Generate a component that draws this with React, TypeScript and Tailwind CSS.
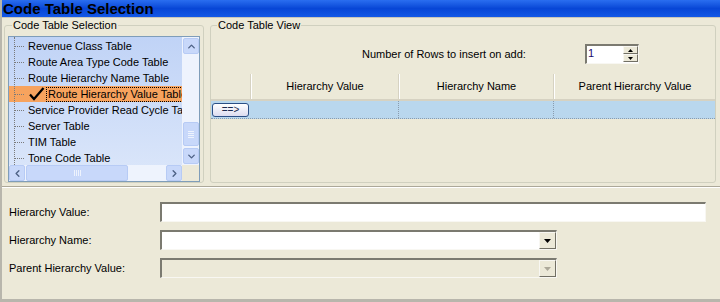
import { ChevronUp, ChevronDown, ChevronLeft, ChevronRight } from 'lucide-react'

const tables = [
  'Revenue Class Table',
  'Route Area Type Code Table',
  'Route Hierarchy Name Table',
  'Route Hierarchy Value Table',
  'Service Provider Read Cycle Table',
  'Server Table',
  'TIM Table',
  'Tone Code Table',
]

const selected = 'Route Hierarchy Value Table'

function ScrollButton({ children }: { children: React.ReactNode }) {
  return (
    <div className="flex h-[16px] w-[16px] shrink-0 items-center justify-center rounded-[2px] border border-[#b7cbf5] bg-[#c8d8fa] text-[#4d6185]">
      {children}
    </div>
  )
}

function Sunken({ className, children }: { className: string; children?: React.ReactNode }) {
  return (
    <div className={`border-t-2 border-l-2 border-r border-b border-t-[#7b7a70] border-l-[#7b7a70] border-r-[#f8f7f2] border-b-[#f8f7f2] ${className}`}>
      {children}
    </div>
  )
}

function DropButton({ disabled }: { disabled?: boolean }) {
  return (
    <div className="flex h-full w-[17px] items-center justify-center border border-t-[#f8f7f2] border-l-[#f8f7f2] border-r-[#716f64] border-b-[#716f64] bg-[#ece9d8]">
      <svg width="7" height="4" viewBox="0 0 7 4">
        <path d="M0 0h7L3.5 4z" fill={disabled ? '#aca899' : '#000'} />
      </svg>
    </div>
  )
}

function CodeTableList() {
  return (
    <fieldset className="mr-0 ml-[2px] h-[164px] w-[200px] min-w-0 shrink-0 rounded-[3px] border border-[#d0d0bf] px-[3px] pt-0 pb-[1px]">
      <legend className="ml-[4px] px-[1px] text-[11px] leading-[13px] text-black">
        Code Table Selection
      </legend>
      <div className="mt-[4px] flex h-[146px] flex-col border border-[#7f9db9] bg-gradient-to-b from-[#c0d3f6] to-[#dce7fa]">
        <div className="flex h-[128px] min-w-0">
          <ul className="relative min-w-0 flex-1 overflow-hidden pt-[1px]">
            <div className="absolute top-0 bottom-0 left-[5px] border-l border-dotted border-[#7a7a7a]" />
            {tables.map((t) =>
              t === selected ? (
                <li key={t} className="flex h-[16px] items-center bg-[#f7a35e]">
                  <div className="ml-[6px] w-[9px] shrink-0 border-t border-dotted border-[#7a7a7a]" />
                  <svg className="ml-[5px] shrink-0" width="16" height="14" viewBox="0 0 16 14">
                    <path d="M1 7.5 L5 12 L14.5 1" stroke="#000" strokeWidth="2.2" fill="none" />
                  </svg>
                  <span className="ml-[1px] border border-dotted border-black pr-[1px] pl-[1px] text-[11px] leading-[13px] whitespace-nowrap">
                    {t}
                  </span>
                </li>
              ) : (
                <li key={t} className="flex h-[16px] items-center">
                  <div className="ml-[6px] w-[9px] shrink-0 border-t border-dotted border-[#7a7a7a]" />
                  <span className="ml-[4px] text-[11px] whitespace-nowrap text-black">{t}</span>
                </li>
              )
            )}
          </ul>
          <div className="flex w-[17px] shrink-0 flex-col justify-between bg-[#eef3fd] py-[1px] pl-[1px]">
            <ScrollButton>
              <ChevronUp size={11} strokeWidth={3} />
            </ScrollButton>
            <div className="flex flex-1 flex-col justify-end pb-[2px]">
              <div className="flex h-[24px] w-[16px] flex-col items-center justify-center gap-[1px] rounded-[2px] border border-[#b7cbf5] bg-[#c8d8fa]">
                <div className="h-px w-[6px] bg-[#eef3fd]" />
                <div className="h-px w-[6px] bg-[#eef3fd]" />
                <div className="h-px w-[6px] bg-[#eef3fd]" />
                <div className="h-px w-[6px] bg-[#eef3fd]" />
              </div>
            </div>
            <ScrollButton>
              <ChevronDown size={11} strokeWidth={3} />
            </ScrollButton>
          </div>
        </div>
        <div className="flex h-[16px] items-center bg-[#eef3fd]">
          <ScrollButton>
            <ChevronLeft size={11} strokeWidth={3} />
          </ScrollButton>
          <div className="ml-[1px] flex h-[16px] w-[102px] items-center justify-center gap-[1px] rounded-[2px] border border-[#b7cbf5] bg-[#c8d8fa]">
            <div className="h-[6px] w-px bg-[#eef3fd]" />
            <div className="h-[6px] w-px bg-[#eef3fd]" />
            <div className="h-[6px] w-px bg-[#eef3fd]" />
            <div className="h-[6px] w-px bg-[#eef3fd]" />
          </div>
          <div className="flex-1" />
          <ScrollButton>
            <ChevronRight size={11} strokeWidth={3} />
          </ScrollButton>
          <div className="h-[16px] w-[17px] bg-[#ece9d8]" />
        </div>
      </div>
    </fieldset>
  )
}

function CodeTableView() {
  return (
    <fieldset className="mr-[4px] h-[164px] min-w-0 flex-1 rounded-[3px] border border-[#d0d0bf] p-0">
      <legend className="ml-[6px] px-[1px] text-[11px] leading-[13px] text-black">
        Code Table View
      </legend>
      <div className="mt-[12px] flex items-center">
        <span className="ml-[151px] w-[223px] text-[11px] text-black">
          Number of Rows to insert on add:
        </span>
        <Sunken className="flex h-[20px] w-[54px] bg-white">
          <span className="flex-1 pl-[1px] text-[11px] leading-[15px] text-[#1b0a6b]">1</span>
          <div className="flex w-[15px] flex-col">
            <div className="flex h-[8px] items-center justify-center border border-t-[#f8f7f2] border-l-[#f8f7f2] border-r-[#716f64] border-b-[#716f64] bg-[#ece9d8]">
              <svg width="5" height="3" viewBox="0 0 5 3">
                <path d="M0 3h5L2.5 0z" fill="#000" />
              </svg>
            </div>
            <div className="flex h-[8px] items-center justify-center border border-t-[#f8f7f2] border-l-[#f8f7f2] border-r-[#716f64] border-b-[#716f64] bg-[#ece9d8]">
              <svg width="5" height="3" viewBox="0 0 5 3">
                <path d="M0 0h5L2.5 3z" fill="#000" />
              </svg>
            </div>
          </div>
        </Sunken>
      </div>
      <div className="mt-[10px] flex h-[27px] border-b-2 border-b-[#d6d2c2] text-[11px] text-black">
        <div className="w-[40px] border-r border-r-[#d6d2c2]" />
        <div className="flex w-[148px] items-center justify-center border-l border-r border-l-white border-r-[#d6d2c2]">
          Hierarchy Value
        </div>
        <div className="flex w-[155px] items-center justify-center border-l border-r border-l-white border-r-[#d6d2c2]">
          Hierarchy Name
        </div>
        <div className="flex flex-1 items-center justify-center border-l border-l-white">
          Parent Hierarchy Value
        </div>
      </div>
      <div className="flex h-[18px] border-b border-dotted border-b-[#8a9cae] bg-[#b9d7ee]">
        <div className="flex w-[40px] items-center pl-[1px]">
          <div className="flex h-[14px] w-[37px] items-center justify-center rounded-[3px] border border-[#2b4f86] bg-gradient-to-b from-white to-[#dcdcf0] text-[10px] leading-none text-[#1b2a4f]">
            ==&gt;
          </div>
        </div>
        <div className="w-[148px] border-r border-dotted border-r-[#8a9cae]" />
        <div className="w-[155px] border-r border-dotted border-r-[#8a9cae]" />
        <div className="flex-1" />
      </div>
    </fieldset>
  )
}

function FormRow({ label, children }: { label: string; children: React.ReactNode }) {
  return (
    <div className="flex h-[28px] items-center">
      <span className="w-[158px] pl-[7px] text-[11px] text-black">{label}</span>
      {children}
    </div>
  )
}

export default function App() {
  return (
    <div className="flex h-[302px] w-[720px] flex-col overflow-hidden border-b-[3px] border-l-[2px] border-[#b8b6ac] bg-[#ece9d8] font-['Liberation_Sans',Arial,sans-serif]">
      <div className="flex h-[17px] items-center bg-gradient-to-b from-[#2a6ef0] via-[#0846d6] to-[#1358e6] pl-[1px] text-[15px] leading-none font-bold text-black">
        Code Table Selection
      </div>
      <div className="h-px bg-[#c8c6bc]" />
      <div className="flex h-[168px] gap-[6px] pt-[1px]">
        <CodeTableList />
        <CodeTableView />
      </div>
      <div className="h-px bg-[#aca899]" />
      <div className="h-px bg-white" />
      <div className="flex flex-col pt-[10px]">
        <FormRow label="Hierarchy Value:">
          <Sunken className="h-[20px] w-[546px] bg-white" />
        </FormRow>
        <FormRow label="Hierarchy Name:">
          <Sunken className="flex h-[20px] w-[397px] justify-end bg-white">
            <DropButton />
          </Sunken>
        </FormRow>
        <FormRow label="Parent Hierarchy Value:">
          <Sunken className="flex h-[20px] w-[397px] justify-end bg-[#ece9d8]">
            <DropButton disabled />
          </Sunken>
        </FormRow>
      </div>
    </div>
  )
}
